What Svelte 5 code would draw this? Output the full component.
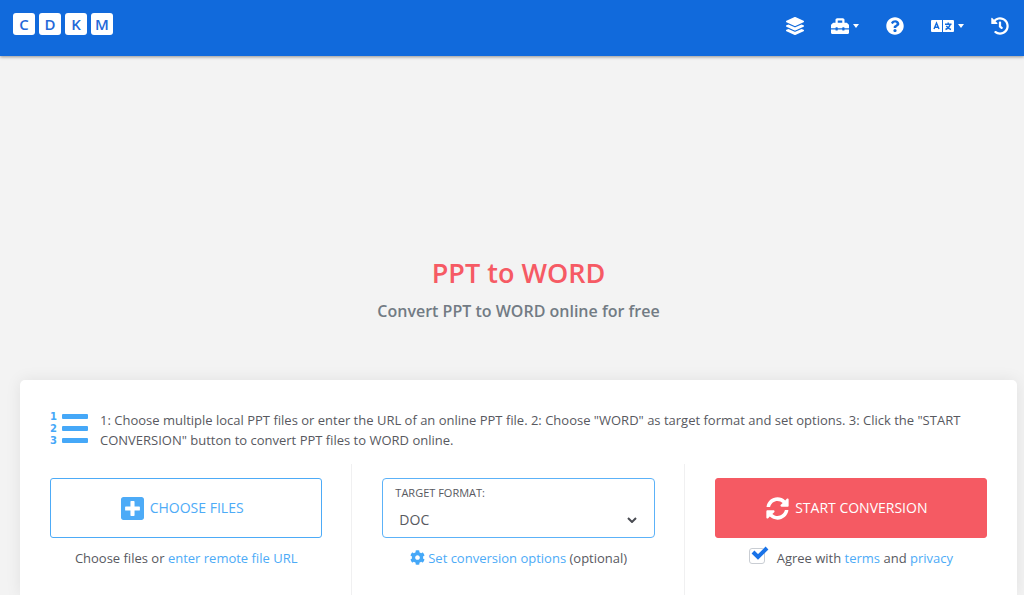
<script>
  const letters = ['C', 'D', 'K', 'M'];
  const formats = ['DOC', 'DOCX'];

  let format = 'DOC';
  let agreed = true;
</script>

<div class="page">
  <header class="navbar">
    <a href="/" class="logo" aria-label="CDKM home">
      {#each letters as letter}
        <span class="logo__tile">{letter}</span>
      {/each}
    </a>

    <nav class="nav">
      <a href="/formats" class="nav__link" aria-label="Formats">
        <svg class="nav__icon" viewBox="0 0 512 512"><path d="M12.41 148.02l232.94 105.67c6.8 3.09 14.49 3.09 21.29 0l232.94-105.67c16.55-7.51 16.55-32.52 0-40.03L266.65 2.31a25.607 25.607 0 0 0-21.29 0L12.41 107.98c-16.55 7.51-16.55 32.53 0 40.04zm487.18 88.28l-58.09-26.33-161.64 73.27c-7.56 3.43-15.59 5.17-23.86 5.17s-16.29-1.74-23.86-5.17L70.51 209.97l-58.1 26.33c-16.55 7.5-16.55 32.5 0 40l232.94 105.59c6.8 3.08 14.49 3.08 21.29 0L499.59 276.3c16.55-7.5 16.55-32.5 0-40zm0 127.8l-57.87-26.23-161.86 73.37c-7.56 3.43-15.59 5.17-23.86 5.17s-16.29-1.74-23.86-5.17L70.29 337.87 12.41 364.1c-16.55 7.5-16.55 32.5 0 40l232.94 105.59c6.8 3.08 14.49 3.08 21.29 0L499.59 404.1c16.55-7.5 16.55-32.5 0-40z"/></svg>
      </a>
      <button class="nav__link" aria-label="Tools">
        <svg class="nav__icon" viewBox="0 0 512 512"><path d="M502.63 214.63l-45.25-45.25c-6-6-14.14-9.37-22.63-9.37H384V80c0-26.51-21.49-48-48-48H176c-26.51 0-48 21.49-48 48v80H77.25c-8.49 0-16.62 3.37-22.63 9.37L9.37 214.63c-6 6-9.37 14.14-9.37 22.63V320h128v-16c0-8.84 7.16-16 16-16h32c8.84 0 16 7.16 16 16v16h128v-16c0-8.84 7.16-16 16-16h32c8.84 0 16 7.16 16 16v16h128v-82.75c0-8.48-3.37-16.62-9.37-22.62zM320 160H192V96h128v64zm64 208c0 8.84-7.16 16-16 16h-32c-8.84 0-16-7.16-16-16v-16H192v16c0 8.84-7.16 16-16 16h-32c-8.84 0-16-7.16-16-16v-16H0v96c0 17.67 14.33 32 32 32h448c17.67 0 32-14.33 32-32v-96H384v16z"/></svg>
        <span class="nav__caret"></span>
      </button>
      <a href="/help" class="nav__link" aria-label="Help">
        <svg class="nav__icon" viewBox="0 0 512 512"><path d="M504 256c0 136.997-111.043 248-248 248S8 392.997 8 256C8 119.083 119.043 8 256 8s248 111.083 248 248zM262.655 90c-54.497 0-89.255 22.957-116.549 63.758-3.536 5.286-2.353 12.415 2.715 16.258l34.699 26.31c5.205 3.947 12.621 3.008 16.665-2.122 17.864-22.658 30.113-35.797 57.303-35.797 20.429 0 45.698 13.148 45.698 32.958 0 14.976-12.363 22.667-32.534 33.976C247.128 238.528 216 254.941 216 296v4c0 6.627 5.373 12 12 12h56c6.627 0 12-5.373 12-12v-1.333c0-28.462 83.186-29.647 83.186-106.667 0-58.002-60.165-102-116.531-102zM256 338c-25.365 0-46 20.635-46 46 0 25.364 20.635 46 46 46s46-20.636 46-46c0-25.365-20.635-46-46-46z"/></svg>
      </a>
      <button class="nav__link" aria-label="Language">
        <svg class="nav__icon nav__icon--wide" viewBox="0 0 23 18">
          <path d="M1 3h10v12H1a1 1 0 0 1-1-1V4a1 1 0 0 1 1-1zM12 3h10a1 1 0 0 1 1 1v10a1 1 0 0 1-1 1H12z"/>
          <path class="nav__glyph" d="M3 12L5.500 6L8 12M4 10.200H7M14 7.200H20.500M17.200 5.500V7.200M19.300 7.200C18.700 9.500 17 11.400 14.500 12.500M15.300 9C16.500 10.500 18 11.800 20 12.500"/>
        </svg>
        <span class="nav__caret"></span>
      </button>
      <a href="/history" class="nav__link" aria-label="History">
        <svg class="nav__icon" viewBox="0 0 512 512"><path d="M504 255.531c.253 136.64-111.18 248.372-247.82 248.468-59.015.042-113.223-20.53-155.822-54.911-11.077-8.94-11.905-25.541-1.839-35.607l11.267-11.267c8.609-8.609 22.353-9.551 31.891-1.984C173.062 425.135 212.781 440 256 440c101.705 0 184-82.311 184-184 0-101.705-82.311-184-184-184-48.814 0-93.149 18.969-126.068 49.932l50.754 50.754c10.08 10.08 2.941 27.314-11.313 27.314H24c-8.837 0-16-7.163-16-16V38.627c0-14.254 17.234-21.393 27.314-11.314l49.372 49.372C129.209 34.136 189.552 8 256 8c136.81 0 247.747 110.78 248 247.531zm-180.912 78.784l9.823-12.63c8.138-10.463 6.253-25.542-4.21-33.679L288 256.349V152c0-13.255-10.745-24-24-24h-16c-13.255 0-24 10.745-24 24v135.651l65.409 50.874c10.463 8.137 25.541 6.253 33.679-4.21z"/></svg>
      </a>
    </nav>
  </header>

  <main class="main">
    <div class="hero">
      <h1>PPT to WORD</h1>
      <h2>Convert PPT to WORD online for free</h2>
    </div>

    <section class="card">
      <div class="steps">
        <svg class="steps__icon" viewBox="0 0 38 36" aria-hidden="true">
          <rect x="12" y="4" width="26" height="5" rx="1"/>
          <rect x="12" y="16" width="26" height="5" rx="1"/>
          <rect x="12" y="28" width="26" height="5" rx="1"/>
          <text x="0" y="10">1</text>
          <text x="0" y="22">2</text>
          <text x="0" y="34">3</text>
        </svg>
        <p>1: Choose multiple local PPT files or enter the URL of an online PPT file. 2: Choose "WORD" as target format and set options. 3: Click the "START CONVERSION" button to convert PPT files to WORD online.</p>
      </div>

      <div class="columns">
        <div class="column">
          <button class="btn btn--outline">
            <svg class="btn__icon" viewBox="0 32 448 448"><path d="M400 32H48C21.5 32 0 53.5 0 80v352c0 26.5 21.5 48 48 48h352c26.5 0 48-21.5 48-48V80c0-26.5-21.5-48-48-48zm-32 252c0 6.600-5.400 12-12 12h-92v92c0 6.600-5.400 12-12 12h-56c-6.600 0-12-5.400-12-12v-92H92c-6.600 0-12-5.400-12-12v-56c0-6.600 5.400-12 12-12h92v-92c0-6.600 5.400-12 12-12h56c6.600 0 12 5.400 12 12v92h92c6.600 0 12 5.400 12 12v56z"/></svg>
            CHOOSE FILES
          </button>
          <p class="note">Choose files or <a href="#url">enter remote file URL</a></p>
        </div>

        <div class="column">
          <div class="field">
            <label for="format">TARGET FORMAT:</label>
            <select id="format" bind:value={format}>
              {#each formats as item}
                <option value={item}>{item}</option>
              {/each}
            </select>
            <svg class="field__arrow" viewBox="0 0 10 6" aria-hidden="true"><path d="M1 1l4 4 4-4"/></svg>
          </div>
          <p class="note">
            <a href="#options"><svg class="note__icon" viewBox="0 0 512 512"><path d="M487.4 315.7l-42.6-24.6c4.3-23.2 4.3-47 0-70.2l42.6-24.6c4.9-2.8 7.1-8.6 5.5-14-11.1-35.6-30-67.8-54.7-94.6-3.8-4.1-10-5.1-14.8-2.3L380.8 110c-17.9-15.4-38.5-27.3-60.8-35.1V25.8c0-5.6-3.9-10.5-9.4-11.7-36.7-8.2-74.3-7.8-109.2 0-5.5 1.2-9.4 6.1-9.4 11.7V75c-22.2 7.9-42.8 19.8-60.8 35.1L88.700 85.5c-4.9-2.8-11-1.9-14.8 2.3-24.7 26.7-43.6 58.9-54.7 94.6-1.7 5.4.6 11.2 5.5 14L67.3 221c-4.3 23.2-4.3 47 0 70.2l-42.6 24.600c-4.9 2.8-7.1 8.6-5.5 14 11.1 35.6 30 67.8 54.7 94.6 3.8 4.1 10 5.1 14.8 2.3l42.6-24.6c17.9 15.4 38.5 27.3 60.8 35.1v49.2c0 5.6 3.9 10.5 9.4 11.7 36.7 8.2 74.3 7.8 109.2 0 5.5-1.2 9.4-6.1 9.4-11.7v-49.2c22.2-7.9 42.8-19.8 60.8-35.1l42.6 24.6c4.9 2.8 11 1.9 14.8-2.3 24.7-26.7 43.6-58.9 54.7-94.6 1.5-5.5-.7-11.3-5.6-14.1zM256 336c-44.1 0-80-35.9-80-80s35.9-80 80-80 80 35.9 80 80-35.9 80-80 80z"/></svg>
            Set conversion options</a> (optional)
          </p>
        </div>

        <div class="column">
          <button class="btn btn--primary" disabled={!agreed}>
            <svg class="btn__icon" viewBox="0 0 512 512"><path d="M370.72 133.28C339.458 104.008 298.888 87.962 255.848 88c-77.458.068-144.328 53.178-162.791 126.85-1.344 5.363-6.122 9.15-11.651 9.15H24.103c-7.498 0-13.194-6.807-11.807-14.176C33.933 94.924 134.813 8 256 8c66.448 0 126.791 26.136 171.315 68.685L463.03 40.97C478.149 25.851 504 36.559 504 57.941V192c0 13.255-10.745 24-24 24H345.941c-21.382 0-32.09-25.851-16.971-40.971l41.75-41.749zM32 296h134.059c21.382 0 32.09 25.851 16.971 40.971l-41.75 41.75c31.262 29.273 71.835 45.319 114.876 45.28 77.418-.07 144.315-53.144 162.787-126.849 1.344-5.363 6.122-9.15 11.651-9.15h57.304c7.498 0 13.194 6.807 11.807 14.176C478.067 417.076 377.187 504 256 504c-66.448 0-126.791-26.136-171.315-68.685L48.97 471.03C33.851 486.149 8 475.441 8 454.059V320c0-13.255 10.745-24 24-24z"/></svg>
            START CONVERSION
          </button>
          <div class="note note--agree">
            <span class="check">
              <input type="checkbox" id="agree" bind:checked={agreed} />
              {#if agreed}
                <svg class="check__mark" viewBox="0 0 18 14" aria-hidden="true"><path d="M2 6l5 5L16 2"/></svg>
              {/if}
            </span>
            <label for="agree">Agree with <a href="/terms">terms</a> and <a href="/privacy">privacy</a></label>
          </div>
        </div>
      </div>
    </section>
  </main>
</div>

<style>
  :global(body) {
    margin: 0;
    background: #f3f3f3;
  }

  .page {
    display: flex;
    flex-direction: column;
    min-height: 100vh;
    font-family: 'Segoe UI', 'Open Sans', 'Noto Sans', sans-serif;
    font-size: 13px;
    line-height: 20px;
    color: #58595f;
  }

  a {
    color: #4dabf7;
    text-decoration: none;
  }

  button,
  select {
    font: inherit;
    cursor: pointer;
  }

  /* Navbar */
  .navbar {
    display: flex;
    justify-content: space-between;
    align-items: flex-start;
    box-sizing: border-box;
    height: 56px;
    padding: 13px 15px 0 13px;
    background: #116adc;
    box-shadow: 0 1px 3px rgba(0, 0, 0, 0.4);
  }

  .logo {
    display: flex;
    gap: 4px;
  }

  .logo__tile {
    width: 22px;
    height: 22px;
    border-radius: 3px;
    background: #fff;
    color: #2468d8;
    font-size: 15px;
    font-weight: 600;
    line-height: 22px;
    text-align: center;
  }

  .nav {
    display: flex;
    align-items: center;
    gap: 27px;
    height: 26px;
  }

  .nav__link {
    display: flex;
    align-items: center;
    gap: 4px;
    padding: 0;
    border: 0;
    background: none;
    color: #fff;
  }

  .nav__icon {
    display: block;
    width: 18px;
    height: 18px;
    fill: #fff;
  }

  .nav__icon--wide {
    width: 23px;
  }

  .nav__glyph {
    fill: none;
    stroke: #116adc;
    stroke-width: 1.4;
  }

  .nav__caret {
    border: 3px solid transparent;
    border-top: 4px solid #fff;
    border-bottom: 0;
  }

  /* Main area */
  .main {
    display: flex;
    flex: 1;
    flex-direction: column;
    padding: 199px 7px 0 20px;
  }

  .hero {
    padding-bottom: 57px;
    text-align: center;
  }

  h1,
  h2,
  p {
    margin: 0;
  }

  h1 {
    color: #f65a64;
    font-size: 27px;
    font-weight: 600;
    line-height: 36px;
  }

  h2 {
    margin-top: 8px;
    color: #727b84;
    font-size: 16px;
    font-weight: 600;
    line-height: 24px;
  }

  .card {
    display: flex;
    flex: 1;
    flex-direction: column;
    border-radius: 5px 5px 0 0;
    background: #fff;
    box-shadow: 0 0 16px rgba(0, 0, 0, 0.08);
  }

  .steps {
    display: flex;
    gap: 12px;
    padding: 30px 30px 14px;
  }

  .steps__icon {
    flex: none;
    width: 38px;
    height: 36px;
    fill: #45a8f8;
  }

  .steps__icon text {
    font: bold 10px 'DejaVu Sans', sans-serif;
  }

  .columns {
    display: flex;
    flex: 1;
  }

  .column {
    flex: 1;
    min-width: 0;
    padding: 14px 29px 0 30px;
    border-right: 1px solid #f0f0f1;
  }

  .column:last-child {
    padding-right: 30px;
    border-right: 0;
  }

  .btn {
    display: flex;
    align-items: center;
    justify-content: center;
    gap: 6px;
    width: 100%;
    height: 60px;
    padding: 0 12px 0 4px;
    border: 1px solid #4dabf7;
    border-radius: 3px;
    font-size: 14px;
  }

  .btn--outline {
    background: #fff;
    color: #4dabf7;
  }

  .btn--primary {
    border-color: #f55a63;
    background: #f55a63;
    color: #fff;
  }

  .btn__icon {
    width: 23px;
    height: 23px;
    fill: currentColor;
  }

  .field {
    position: relative;
    display: flex;
    flex-direction: column;
    box-sizing: border-box;
    height: 60px;
    border: 1px solid #5cb2f8;
    border-radius: 4px;
  }

  .field label {
    padding: 4px 12px 0;
    font-size: 11px;
  }

  .field select {
    flex: 1;
    padding: 0 16px;
    border: 0;
    background: none;
    color: inherit;
    font-size: 14px;
    appearance: none;
  }

  .field__arrow {
    position: absolute;
    right: 17px;
    bottom: 14px;
    width: 10px;
    height: 6px;
    fill: none;
    stroke: #494b52;
    stroke-width: 2;
    pointer-events: none;
  }

  .note {
    margin-top: 10px;
    text-align: center;
  }

  .note__icon {
    width: 15px;
    height: 15px;
    fill: #45a8f8;
    vertical-align: -2px;
  }

  .note--agree {
    display: flex;
    justify-content: center;
    gap: 12px;
  }

  .check {
    position: relative;
    display: flex;
  }

  .check input {
    width: 16px;
    height: 16px;
    margin: 0;
    border: 1px solid #c9cdd3;
    border-radius: 3px;
    background: #fff;
    appearance: none;
  }

  .check__mark {
    position: absolute;
    top: -2px;
    left: 2px;
    width: 18px;
    height: 14px;
    fill: none;
    stroke: #1a73e8;
    stroke-width: 4;
    pointer-events: none;
  }
</style>
